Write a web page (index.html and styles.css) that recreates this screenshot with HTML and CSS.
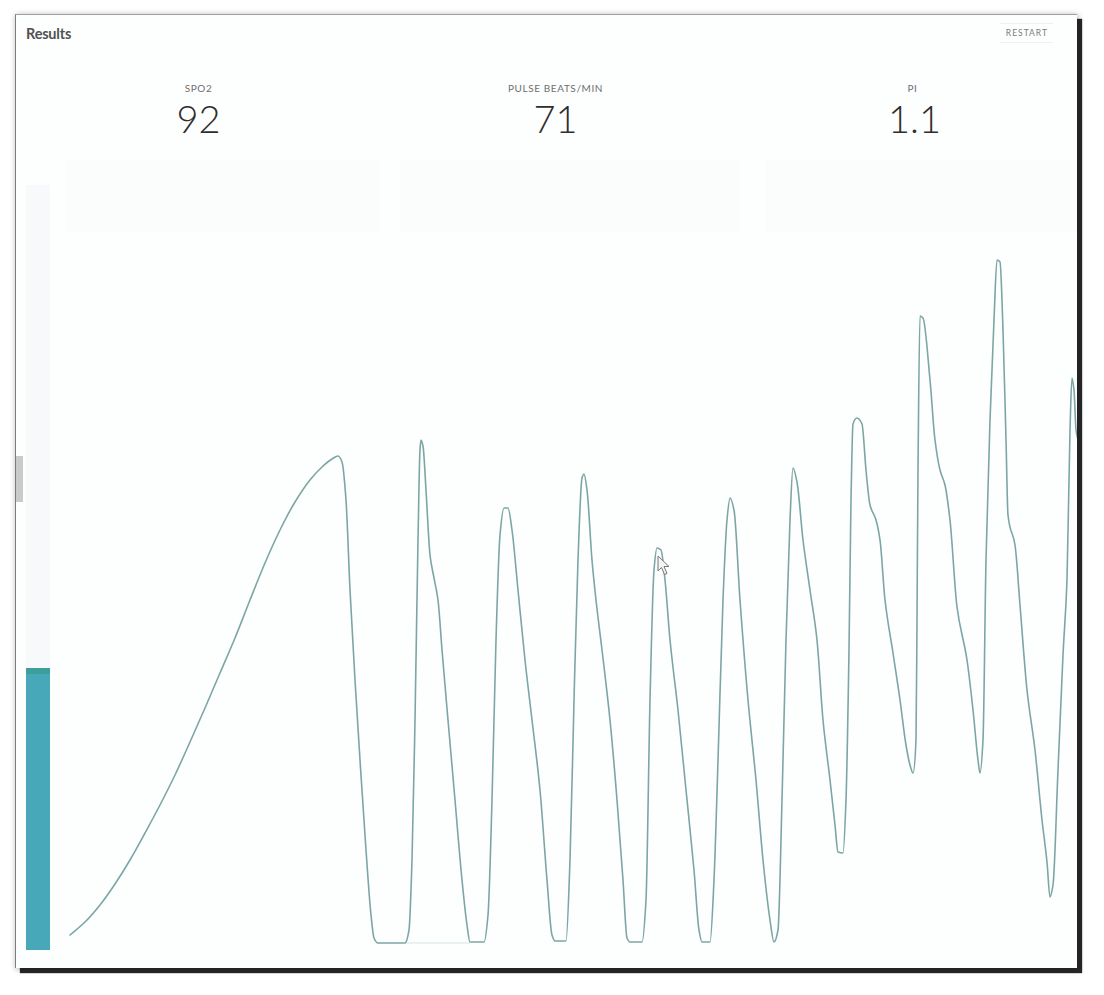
FILE: index.html
```html
<!DOCTYPE html>
<html>
<head>
<meta charset="utf-8">
<link rel="stylesheet" href="styles.css">
</head>
<body>
<div class="card">
  <div class="tab"></div>
  <div class="header">
    <span class="title">Results</span>
    <span class="restart">RESTART</span>
  </div>
  <div class="stats">
    <div class="stat"><div class="label">SPO2</div><div class="value">92</div></div>
    <div class="stat"><div class="label">PULSE BEATS/MIN</div><div class="value">71</div></div>
    <div class="stat"><div class="label">PI</div><div class="value">1.1</div></div>
  </div>
  <div class="chart">
    <div class="meter">
      <div class="meter-track"></div>
      <div class="meter-fill"></div>
    </div>
    <svg class="wave" viewBox="50 138 1027 830" width="1027" height="830">
      <rect x="65" y="160" width="315" height="72" fill="#fbfcfc"/>
      <rect x="400" y="160" width="340" height="72" fill="#fbfcfc"/>
      <rect x="765" y="160" width="320" height="72" fill="#fbfcfc"/>
      <line x1="405" y1="943" x2="470" y2="943" stroke="#d6e4e4" stroke-width="1"/>
      <path id="wave-path" fill="none" stroke="#7ca6a4" stroke-width="1.6" stroke-linejoin="round" stroke-linecap="round"
        data-points="70,935 85,922 100,905 115,884 130,860 145,833 160,805 175,775 190,742 205,708 220,673 235,638 250,600 265,563 280,530 295,502 310,480 322,467 332,459 338,456 342,462 346,500 350,590 355,680 360,760 366,850 371,915 374,938 378,943 405,943 409,930 412,860 415,720 418,540 420,450 421,440 423,446 426,490 430,555 434,578 438,600 442,650 448,720 455,800 462,880 467,925 470,942 484,942 488,915 492,800 496,640 500,535 504,508 508,508 512,530 518,590 525,660 532,720 540,790 547,880 552,935 555,941 566,941 570,860 574,700 578,560 582,478 584,474 587,490 592,560 596,600 602,650 610,720 617,800 623,880 627,938 630,942 642,942 646,900 650,700 654,570 657,548 661,550 665,580 670,640 678,710 686,790 694,870 699,930 702,942 710,942 714,880 718,760 723,600 727,520 730,498 734,510 740,600 748,700 756,780 763,860 770,920 774,942 778,930 782,800 786,640 790,520 793,468 797,482 803,540 810,590 817,640 823,720 830,780 835,825 838,852 843,853 846,800 849,650 851,500 853,424 857,418 862,424 866,470 870,505 876,520 880,540 885,600 893,653 900,700 906,745 910,765 913,773 916,740 917,620 918,470 920,316 923,318 930,380 935,440 940,470 945,485 950,520 957,607 967,660 973,710 978,760 980,773 983,740 986,560 990,420 994,320 997,260 1000,262 1003,330 1006,440 1008,515 1015,545 1020,605 1027,690 1035,750 1042,820 1047,862 1050,897 1053,885 1058,770 1063,655 1067,580 1070,430 1072,378 1074,390 1076,430 1078,440"
        d="M70,935"/>
    </svg>
  </div>
  <svg class="cursor" viewBox="0 0 14 22" width="14" height="22">
    <path d="M1 1 L1 16 L4.5 12.5 L7.5 19.5 L10 18.5 L7 11.5 L12 11.5 Z" fill="#f4f4f4" stroke="#777" stroke-width="1" stroke-linejoin="round"/>
  </svg>
</div>
<script src="chart.js"></script>
</body>
</html>
```

FILE: styles.css
```css
html, body {
  margin: 0;
  padding: 0;
  background: #ffffff;
}

body {
  font-family: Lato, "Open Sans", sans-serif;
  height: 995px;
}

.card {
  position: relative;
  margin: 14px 0 0 15px;
  width: 1062px;
  height: 954px;
  box-sizing: border-box;
  border-left: 1px solid #7e7e7e;
  border-top: 1px solid #a0a0a0;
  background: #fdfefe;
  box-shadow: 5px 5px 1px rgba(20, 20, 20, 0.92), 1px 1px 6px rgba(0, 0, 0, 0.35);
  display: flex;
  flex-direction: column;
}

.tab {
  position: absolute;
  left: 0;
  top: 441px;
  width: 7px;
  height: 46px;
  background: #c9cbcb;
}

.header {
  height: 36px;
  display: flex;
  align-items: center;
  justify-content: space-between;
  padding: 0 24px 0 10px;
  flex-shrink: 0;
}

.title {
  font-size: 14.5px;
  font-weight: 700;
  color: #525252;
  letter-spacing: -0.2px;
}

.restart {
  font-size: 8.5px;
  color: #7a7a7a;
  letter-spacing: 1px;
  padding: 4px 5px 4px 6px;
  border-top: 1px solid #efefef;
  border-bottom: 1px solid #efefef;
}

.stats {
  display: grid;
  grid-template-columns: 357px 357px 357px;
  padding: 31px 0 0 4px;
  flex-shrink: 0;
}

.stat {
  display: flex;
  flex-direction: column;
  align-items: center;
}

.label {
  font-size: 10px;
  line-height: 12px;
  color: #6e6e6e;
  letter-spacing: 0.6px;
}

.value {
  font-size: 38px;
  line-height: 48px;
  font-weight: 300;
  color: #2e2e2e;
  margin-bottom: -4px;
}

.stat:last-child .value {
  padding-left: 4px;
}

.chart {
  display: flex;
  flex: 1;
  min-height: 0;
  overflow: hidden;
}

.meter {
  margin-left: 10px;
  width: 24px;
  padding: 47px 0 18px;
  display: flex;
  flex-direction: column;
  flex-shrink: 0;
}

.meter-track {
  height: 483px;
  background: #f8f9fa;
}

.meter-fill {
  flex: 1;
  background: #46a8b8;
  border-top: 6px solid #3e9e9a;
}

.wave {
  display: block;
  flex-shrink: 0;
}

.cursor {
  position: absolute;
  left: 641px;
  top: 540px;
}
```

FILE: chart.js
```js
(function () {
  var path = document.getElementById('wave-path');
  var pts = path.getAttribute('data-points').trim().split(/\s+/).map(function (p) {
    var a = p.split(',');
    return [parseFloat(a[0]), parseFloat(a[1])];
  });
  var n = pts.length;
  var slopes = [];
  for (var i = 0; i < n - 1; i++) {
    slopes.push((pts[i + 1][1] - pts[i][1]) / (pts[i + 1][0] - pts[i][0]));
  }
  var tang = [];
  tang[0] = slopes[0];
  tang[n - 1] = slopes[n - 2];
  for (var j = 1; j < n - 1; j++) {
    var s0 = slopes[j - 1], s1 = slopes[j];
    if (s0 * s1 <= 0) {
      tang[j] = 0;
    } else {
      var h0 = pts[j][0] - pts[j - 1][0];
      var h1 = pts[j + 1][0] - pts[j][0];
      var w1 = 2 * h1 + h0, w2 = h1 + 2 * h0;
      tang[j] = (w1 + w2) / (w1 / s0 + w2 / s1);
    }
  }
  var d = 'M' + pts[0][0] + ',' + pts[0][1];
  for (var k = 0; k < n - 1; k++) {
    var dx = (pts[k + 1][0] - pts[k][0]) / 3;
    var c1x = pts[k][0] + dx, c1y = pts[k][1] + tang[k] * dx;
    var c2x = pts[k + 1][0] - dx, c2y = pts[k + 1][1] - tang[k + 1] * dx;
    d += ' C' + c1x.toFixed(1) + ',' + c1y.toFixed(1) + ' ' + c2x.toFixed(1) + ',' + c2y.toFixed(1) + ' ' + pts[k + 1][0] + ',' + pts[k + 1][1];
  }
  path.setAttribute('d', d);
})();
```
